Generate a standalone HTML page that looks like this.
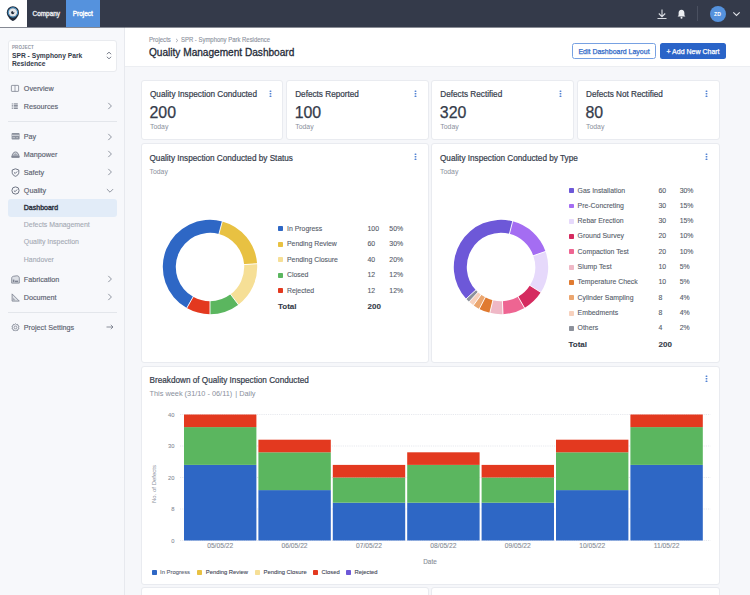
<!DOCTYPE html>
<html><head><meta charset="utf-8">
<style>
*{box-sizing:border-box;margin:0;padding:0}
html,body{width:750px;height:595px;overflow:hidden;background:#f6f7fa;font-family:"Liberation Sans",sans-serif;color:#3a4150}
.a{position:absolute;white-space:nowrap}
#nav{position:absolute;left:0;top:0;width:750px;height:27px;background:#343a4a}
#logo{position:absolute;left:0;top:0;width:27px;height:27px;background:#fff}
#side{position:absolute;left:0;top:27px;width:125px;height:568px;background:#f7f8fb;border-right:1px solid #e7e9ee}
#hdr{position:absolute;left:125px;top:27px;width:625px;height:40px;background:#fff;border-bottom:1px solid #eceef2}
.card{position:absolute;background:#fff;border:1px solid #e9ebf0;border-radius:3px}
.ttl{font-size:8.2px;color:#363d4c;-webkit-text-stroke:0.2px #363d4c}
.sub{font-size:6.9px;color:#8a909c}
.kb{position:absolute;width:3px;height:8px}
.kb i{position:absolute;left:0;width:1.4px;height:1.4px;background:#4d7fd0;border-radius:50%}
.nv{position:absolute;left:23.8px;margin-top:-0.4px;font-size:7.2px;color:#5b6270;white-space:nowrap;-webkit-text-stroke:0.15px #5b6270}
.chev{position:absolute;left:107.3px;margin-top:0.8px;width:4px;height:4px;border-right:1px solid #80869a;border-top:1px solid #80869a;transform:rotate(45deg)}
.lg{position:absolute;font-size:6.9px;color:#545b69;white-space:nowrap;-webkit-text-stroke:0.1px #545b69}
.sq{position:absolute;width:4.9px;height:4.9px;border-radius:0.8px;margin:0.6px 0 0 0.3px}
</style></head><body>
<div id="nav">
 <div class="a" style="left:66px;top:0;width:34px;height:27px;background:#5592dd"></div>
 <div class="a" style="left:32.6px;top:9.2px;font-size:6.4px;color:#e6e8ec;line-height:9px;-webkit-text-stroke:0.35px #e6e8ec;transform:scaleY(1.12);transform-origin:0 50%">Company</div>
 <div class="a" style="left:72.7px;top:9.2px;font-size:6.45px;color:#fff;line-height:9px;-webkit-text-stroke:0.35px #fff;transform:scaleY(1.12);transform-origin:0 50%">Project</div>
 <svg class="a" style="left:655px;top:8px" width="14" height="12" viewBox="0 0 14 12"><path d="M7 1.5V8.5M3.8 5.5L7 8.7L10.2 5.5M2.5 10.5H11.5" stroke="#d9dce2" stroke-width="1.1" fill="none"/></svg>
 <svg class="a" style="left:676px;top:9px" width="11" height="10" viewBox="0 0 11 10"><path d="M5.5 0.8C3.6 0.8 2.6 2.2 2.6 4V6.3L1.6 7.6H9.4L8.4 6.3V4C8.4 2.2 7.4 0.8 5.5 0.8Z" fill="#eceef2"/><circle cx="5.5" cy="8.7" r="1" fill="#eceef2"/></svg>
 <div class="a" style="left:697px;top:6px;width:1px;height:15px;background:#4a5060"></div>
 <div class="a" style="left:709.5px;top:6px;width:16px;height:16px;border-radius:50%;background:#5592dd;color:#fff;font-size:5.2px;font-weight:bold;text-align:center;line-height:16px">ZD</div>
 <svg class="a" style="left:732px;top:11px" width="9" height="6" viewBox="0 0 9 6"><path d="M1.3 1.3L4.5 4.4L7.7 1.3" stroke="#e0e3e8" stroke-width="1.1" fill="none"/></svg>
</div>
<div class="a" style="left:0;top:27px;width:750px;height:1px;background:rgba(40,46,62,0.55);z-index:5"></div>
<div id="logo">
 <svg class="a" style="left:0;top:0" width="27" height="27" viewBox="0 0 27 27"><path d="M12.9 20.9C11.6 20.9 6.9 16.8 6.8 12.4A6.1 6.1 0 0 1 19 12.4C18.9 16.8 14.2 20.9 12.9 20.9Z" fill="#232b3a"/><circle cx="12.9" cy="12.4" r="4.7" fill="none" stroke="#3d9ad6" stroke-width="1.0"/><circle cx="12.9" cy="12.4" r="4.2" fill="#e2e5e9"/><circle cx="12.7" cy="12.6" r="1.6" fill="#1f2736"/><circle cx="13.5" cy="11.8" r="0.75" fill="#e2e5e9"/></svg>
</div>
<div id="side">
 <div class="a" style="left:8px;top:12.5px;width:109px;height:32px;background:#fff;border:1px solid #e9ebef;border-radius:3px"></div>
 <div class="a" style="left:12px;top:18px;font-size:4.5px;font-weight:bold;color:#9096a2;letter-spacing:0.1px;line-height:5px">PROJECT</div>
 <div class="a" style="left:12px;top:25px;font-size:6.7px;font-weight:bold;color:#343b4a;line-height:8.2px">SPR - Symphony Park<br>Residence</div>
 <svg class="a" style="left:105px;top:24px" width="8" height="9" viewBox="0 0 8 9"><path d="M1.8 3.2L4 1.2L6.2 3.2M1.8 5.8L4 7.8L6.2 5.8" stroke="#6c7280" stroke-width="0.9" fill="none"/></svg>
 <!-- nav items -->
 <svg class="a" style="left:10px;top:57px" width="10" height="9" viewBox="0 0 10 9"><rect x="1.4" y="1.4" width="7.2" height="6" rx="0.5" stroke="#7d8391" stroke-width="0.8" fill="none"/><path d="M5 1.4V7.4" stroke="#7d8391" stroke-width="0.7"/></svg>
 <div class="nv" style="top:57px">Overview</div>
 <svg class="a" style="left:10px;top:75px" width="10" height="9" viewBox="0 0 10 9"><path d="M1.8 1.9H2.8M1.8 3.4H2.8M1.8 4.9H2.8M1.8 6.4H2.8M3.7 1.9H7.8M3.7 3.4H7.8M3.7 4.9H7.8M3.7 6.4H7.8" stroke="#6e7483" stroke-width="0.9"/></svg>
 <div class="nv" style="top:75px">Resources</div>
 <svg class="a" style="left:107px;top:74.9px" width="6" height="8" viewBox="0 0 6 8"><path d="M1.3 0.9L4.4 4L1.3 7.1" stroke="#7d8390" stroke-width="0.85" fill="none"/></svg>
 <div class="a" style="left:8px;top:94px;width:109px;height:1px;background:#e3e6eb"></div>
 <svg class="a" style="left:10.5px;top:105px" width="9" height="9" viewBox="0 0 9 9"><rect x="0.6" y="1.1" width="8" height="6.4" rx="0.8" fill="#8b919d"/><rect x="0.6" y="2.7" width="8" height="1.3" fill="#c9ccd3"/><rect x="1.5" y="5.3" width="2.6" height="0.8" fill="#c9ccd3"/><rect x="5.3" y="5.3" width="1.6" height="0.8" fill="#c9ccd3"/></svg>
 <div class="nv" style="top:105px">Pay</div>
 <svg class="a" style="left:107px;top:105.5px" width="6" height="8" viewBox="0 0 6 8"><path d="M1.3 0.9L4.4 4L1.3 7.1" stroke="#7d8390" stroke-width="0.85" fill="none"/></svg>
 <svg class="a" style="left:10.5px;top:123px" width="9" height="9" viewBox="0 0 9 9"><path d="M0.9 7C0.9 4.2 2.5 1.9 4.5 1.9C6.5 1.9 8.1 4.2 8.1 7Z" fill="#a2a7b2" stroke="#7d8391" stroke-width="0.8"/><path d="M2.3 4.5L4.5 2.9L6.7 4.5" stroke="#eef0f3" stroke-width="0.7" fill="none"/><rect x="0.4" y="6.2" width="8.2" height="1.5" rx="0.4" fill="#7d8391"/></svg>
 <div class="nv" style="top:123px">Manpower</div>
 <svg class="a" style="left:107px;top:123.1px" width="6" height="8" viewBox="0 0 6 8"><path d="M1.3 0.9L4.4 4L1.3 7.1" stroke="#7d8390" stroke-width="0.85" fill="none"/></svg>
 <svg class="a" style="left:10.5px;top:141px" width="9" height="9" viewBox="0 0 9 9"><path d="M4.5 0.8L7.8 2V4.5C7.8 6.3 6.4 7.6 4.5 8.3C2.6 7.6 1.2 6.3 1.2 4.5V2Z" stroke="#6e7483" stroke-width="1" fill="none"/><path d="M3 4.4L4.2 5.5L6.1 3.5" stroke="#6e7483" stroke-width="1" fill="none"/></svg>
 <div class="nv" style="top:141px">Safety</div>
 <svg class="a" style="left:107px;top:140.8px" width="6" height="8" viewBox="0 0 6 8"><path d="M1.3 0.9L4.4 4L1.3 7.1" stroke="#7d8390" stroke-width="0.85" fill="none"/></svg>
 <svg class="a" style="left:10.5px;top:158.5px" width="9" height="9" viewBox="0 0 9 9"><circle cx="4.5" cy="4.5" r="3.6" stroke="#6e7483" stroke-width="1" fill="none"/><path d="M2.9 4.6L4.1 5.7L6.1 3.5" stroke="#6e7483" stroke-width="1" fill="none"/></svg>
 <div class="nv" style="top:159px">Quality</div>
 <svg class="a" style="left:106px;top:160.8px" width="8" height="6" viewBox="0 0 8 6"><path d="M0.9 1.1L4 4.2L7.1 1.1" stroke="#7d8390" stroke-width="0.85" fill="none"/></svg>
 <div class="a" style="left:8px;top:172px;width:109px;height:17.5px;background:#e2ecf8;border-radius:3px"></div>
 <div class="nv" style="top:177px;color:#2f3644;font-size:7px;-webkit-text-stroke:0.4px #2f3644">Dashboard</div>
 <div class="nv" style="top:194.3px;font-size:6.95px;color:#a4a9b3;-webkit-text-stroke:0.1px #a4a9b3">Defects Management</div>
 <div class="nv" style="top:211.8px;font-size:6.95px;color:#a4a9b3;-webkit-text-stroke:0.1px #a4a9b3">Quality Inspection</div>
 <div class="nv" style="top:229.8px;font-size:6.95px;color:#a4a9b3;-webkit-text-stroke:0.1px #a4a9b3">Handover</div>
 <svg class="a" style="left:10.5px;top:247.5px" width="9" height="9" viewBox="0 0 9 9"><path d="M0.7 8.1V3.2C0.7 2.2 1.3 1.5 2.3 1.3L5.8 0.8C7.3 0.7 8.3 1.7 8.3 3.2V8.1Z" fill="#dde0e6" stroke="#7d8391" stroke-width="0.85"/><rect x="1.8" y="4.6" width="1.6" height="2.6" fill="#7d8391"/><rect x="3.9" y="5.6" width="3.2" height="1.6" fill="#7d8391"/></svg>
 <div class="nv" style="top:248px">Fabrication</div>
 <svg class="a" style="left:107px;top:248.2px" width="6" height="8" viewBox="0 0 6 8"><path d="M1.3 0.9L4.4 4L1.3 7.1" stroke="#7d8390" stroke-width="0.85" fill="none"/></svg>
 <svg class="a" style="left:10.5px;top:265.5px" width="9" height="9" viewBox="0 0 9 9"><path d="M1.1 0.9V8.1H8.3Z" fill="#dde0e6" stroke="#7d8391" stroke-width="0.85" stroke-linejoin="round"/><path d="M2.4 5.2V6.8H4" fill="none" stroke="#7d8391" stroke-width="0.6"/></svg>
 <div class="nv" style="top:266px">Document</div>
 <svg class="a" style="left:107px;top:266.2px" width="6" height="8" viewBox="0 0 6 8"><path d="M1.3 0.9L4.4 4L1.3 7.1" stroke="#7d8390" stroke-width="0.85" fill="none"/></svg>
 <div class="a" style="left:8px;top:285px;width:109px;height:1px;background:#e3e6eb"></div>
 <svg class="a" style="left:10.5px;top:295.5px" width="9" height="9" viewBox="0 0 9 9"><path d="M4.5 0.8L5.4 1.6L6.6 1.4L6.9 2.6L8 3.2L7.6 4.4L8 5.6L6.9 6.2L6.6 7.4L5.4 7.2L4.5 8.1L3.6 7.2L2.4 7.4L2.1 6.2L1 5.6L1.4 4.4L1 3.2L2.1 2.6L2.4 1.4L3.6 1.6Z" fill="none" stroke="#7d8391" stroke-width="0.9" stroke-linejoin="round"/><circle cx="4.5" cy="4.45" r="1.4" fill="none" stroke="#7d8391" stroke-width="0.8"/></svg>
 <div class="nv" style="top:296px">Project Settings</div>
 <svg class="a" style="left:106px;top:297px" width="8" height="6" viewBox="0 0 8 6"><path d="M0.5 3H7M4.8 0.9L7 3L4.8 5.1" stroke="#6e7483" stroke-width="0.8" fill="none"/></svg>
</div>
<div id="hdr">
 <div class="a" style="left:24px;top:9.75px;font-size:6.05px;color:#8a909c;line-height:7px;transform:scaleY(1.1);-webkit-text-stroke:0.1px #8a909c">Projects</div>
 <svg class="a" style="left:49.5px;top:11px" width="4" height="5" viewBox="0 0 4 5"><path d="M1 0.8L2.8 2.5L1 4.2" stroke="#8a909c" stroke-width="0.7" fill="none"/></svg>
 <div class="a" style="left:56px;top:10px;font-size:5.95px;color:#8a909c;line-height:7px;transform:scaleY(1.1);transform-origin:0 50%;-webkit-text-stroke:0.1px #8a909c">SPR - Symphony Park Residence</div>
 <div class="a" style="left:24px;top:19.8px;font-size:10.1px;color:#252b38;line-height:12px;-webkit-text-stroke:0.3px #252b38">Quality Management Dashboard</div>
 <div class="a" style="left:447px;top:16px;width:84px;height:16px;border:1px solid #77a1e2;border-radius:2.5px;font-size:7px;color:#3069c8;text-align:center;line-height:15px;-webkit-text-stroke:0.25px #3069c8">Edit Dashboard Layout</div>
 <div class="a" style="left:535px;top:16px;width:66px;height:16px;background:#2a64c8;border-radius:2.5px;font-size:7px;color:#fff;text-align:center;line-height:17px;-webkit-text-stroke:0.25px #fff">+ Add New Chart</div>
</div>
<div class="card" style="left:141px;top:80px;width:142.3px;height:60px">
 <div class="a ttl" style="left:8px;top:9px">Quality Inspection Conducted</div>
 <svg class="kb" style="left:126.8px;top:8.9px" width="3" height="8" viewBox="0 0 3 8"><rect x="0.5" y="0.5" width="2" height="1.5" rx="0.7" fill="#5383d3"/><rect x="0.5" y="3" width="2" height="1.5" rx="0.7" fill="#5383d3"/><rect x="0.5" y="5.6" width="2" height="1.5" rx="0.7" fill="#5383d3"/></svg>
 <div class="a" style="left:7.5px;top:22.5px;font-size:15.9px;color:#343b4a;line-height:18px;-webkit-text-stroke:0.25px #343b4a">200</div>
 <div class="a sub" style="left:8px;top:41.7px">Today</div>
</div>
<div class="card" style="left:286.2px;top:80px;width:142.6px;height:60px">
 <div class="a ttl" style="left:8px;top:9px">Defects Reported</div>
 <svg class="kb" style="left:126.8px;top:8.9px" width="3" height="8" viewBox="0 0 3 8"><rect x="0.5" y="0.5" width="2" height="1.5" rx="0.7" fill="#5383d3"/><rect x="0.5" y="3" width="2" height="1.5" rx="0.7" fill="#5383d3"/><rect x="0.5" y="5.6" width="2" height="1.5" rx="0.7" fill="#5383d3"/></svg>
 <div class="a" style="left:7.5px;top:22.5px;font-size:15.9px;color:#343b4a;line-height:18px;-webkit-text-stroke:0.25px #343b4a">100</div>
 <div class="a sub" style="left:8px;top:41.7px">Today</div>
</div>
<div class="card" style="left:431.3px;top:80px;width:142.6px;height:60px">
 <div class="a ttl" style="left:8px;top:9px">Defects Rectified</div>
 <svg class="kb" style="left:126.8px;top:8.9px" width="3" height="8" viewBox="0 0 3 8"><rect x="0.5" y="0.5" width="2" height="1.5" rx="0.7" fill="#5383d3"/><rect x="0.5" y="3" width="2" height="1.5" rx="0.7" fill="#5383d3"/><rect x="0.5" y="5.6" width="2" height="1.5" rx="0.7" fill="#5383d3"/></svg>
 <div class="a" style="left:7.5px;top:22.5px;font-size:15.9px;color:#343b4a;line-height:18px;-webkit-text-stroke:0.25px #343b4a">320</div>
 <div class="a sub" style="left:8px;top:41.7px">Today</div>
</div>
<div class="card" style="left:577px;top:80px;width:142.6px;height:60px">
 <div class="a ttl" style="left:8px;top:9px">Defects Not Rectified</div>
 <svg class="kb" style="left:126.8px;top:8.9px" width="3" height="8" viewBox="0 0 3 8"><rect x="0.5" y="0.5" width="2" height="1.5" rx="0.7" fill="#5383d3"/><rect x="0.5" y="3" width="2" height="1.5" rx="0.7" fill="#5383d3"/><rect x="0.5" y="5.6" width="2" height="1.5" rx="0.7" fill="#5383d3"/></svg>
 <div class="a" style="left:7.5px;top:22.5px;font-size:15.9px;color:#343b4a;line-height:18px;-webkit-text-stroke:0.25px #343b4a">80</div>
 <div class="a sub" style="left:8px;top:41.7px">Today</div>
</div>
<!--ROW2-->
<div class="card" style="left:141px;top:143px;width:287.8px;height:219.5px"></div>
<div class="a ttl" style="left:149.5px;top:153.5px">Quality Inspection Conducted by Status</div>
<svg class="kb" style="left:413.8px;top:153.0px" width="3" height="8" viewBox="0 0 3 8"><rect x="0.5" y="0.5" width="2" height="1.5" rx="0.7" fill="#5383d3"/><rect x="0.5" y="3" width="2" height="1.5" rx="0.7" fill="#5383d3"/><rect x="0.5" y="5.6" width="2" height="1.5" rx="0.7" fill="#5383d3"/></svg>
<div class="a sub" style="left:149.5px;top:168px">Today</div>
<div class="a" style="left:160px;top:217.2px"><svg width="100" height="100" viewBox="0 0 100 100"><path d="M62.30 4.43A47.2 47.2 0 0 1 97.09 46.71L84.12 47.61A34.2 34.2 0 0 0 58.91 16.98Z" fill="#e8c142"/><path d="M97.09 46.71A47.2 47.2 0 0 1 78.41 87.70L70.58 77.31A34.2 34.2 0 0 0 84.12 47.61Z" fill="#f6df96"/><path d="M78.41 87.70A47.2 47.2 0 0 1 50.00 97.20L50.00 84.20A34.2 34.2 0 0 0 70.58 77.31Z" fill="#5bb65f"/><path d="M50.00 97.20A47.2 47.2 0 0 1 26.76 91.08L33.16 79.77A34.2 34.2 0 0 0 50.00 84.20Z" fill="#e3391f"/><path d="M26.76 91.08A47.2 47.2 0 0 1 62.30 4.43L58.91 16.98A34.2 34.2 0 0 0 33.16 79.77Z" fill="#2e67c5"/><line x1="58.65" y1="17.95" x2="62.56" y2="3.46" stroke="#fff" stroke-width="0.9"/><line x1="83.12" y1="47.68" x2="98.08" y2="46.64" stroke="#fff" stroke-width="0.9"/><line x1="69.98" y1="76.51" x2="79.01" y2="88.49" stroke="#fff" stroke-width="0.9"/><line x1="50.00" y1="83.20" x2="50.00" y2="98.20" stroke="#fff" stroke-width="0.9"/><line x1="33.65" y1="78.90" x2="26.27" y2="91.95" stroke="#fff" stroke-width="0.9"/></svg></div>
<div class="sq" style="left:278px;top:225.7px;background:#2e67c5"></div>
<div class="lg" style="left:287px;top:225px">In Progress</div>
<div class="lg" style="left:367.5px;top:225px">100</div>
<div class="lg" style="left:389.3px;top:225px">50%</div>
<div class="sq" style="left:278px;top:241.2px;background:#e8c142"></div>
<div class="lg" style="left:287px;top:240px">Pending Review</div>
<div class="lg" style="left:367.5px;top:240px">60</div>
<div class="lg" style="left:389.3px;top:240px">30%</div>
<div class="sq" style="left:278px;top:256.7px;background:#f6df96"></div>
<div class="lg" style="left:287px;top:256px">Pending Closure</div>
<div class="lg" style="left:367.5px;top:256px">40</div>
<div class="lg" style="left:389.3px;top:256px">20%</div>
<div class="sq" style="left:278px;top:272.2px;background:#5bb65f"></div>
<div class="lg" style="left:287px;top:271px">Closed</div>
<div class="lg" style="left:367.5px;top:271px">12</div>
<div class="lg" style="left:389.3px;top:271px">12%</div>
<div class="sq" style="left:278px;top:287.7px;background:#e3391f"></div>
<div class="lg" style="left:287px;top:287px">Rejected</div>
<div class="lg" style="left:367.5px;top:287px">12</div>
<div class="lg" style="left:389.3px;top:287px">12%</div>
<div class="lg" style="left:278px;top:302px;font-weight:bold;color:#2f3644;font-size:8px">Total</div>
<div class="lg" style="left:367.5px;top:302px;font-weight:bold;color:#2f3644;font-size:8px">200</div>
<div class="card" style="left:431.3px;top:143px;width:288.6px;height:219.5px"></div>
<div class="a ttl" style="left:440px;top:153.5px">Quality Inspection Conducted by Type</div>
<svg class="kb" style="left:704.6px;top:153.0px" width="3" height="8" viewBox="0 0 3 8"><rect x="0.5" y="0.5" width="2" height="1.5" rx="0.7" fill="#5383d3"/><rect x="0.5" y="3" width="2" height="1.5" rx="0.7" fill="#5383d3"/><rect x="0.5" y="5.6" width="2" height="1.5" rx="0.7" fill="#5383d3"/></svg>
<div class="a sub" style="left:440px;top:168px">Today</div>
<div class="a" style="left:450.9px;top:217.1px"><svg width="100" height="100" viewBox="0 0 100 100"><path d="M61.66 4.26A47.2 47.2 0 0 1 94.55 34.40L82.28 38.70A34.2 34.2 0 0 0 58.45 16.86Z" fill="#a46df2"/><path d="M94.55 34.40A47.2 47.2 0 0 1 89.81 75.36L78.84 68.38A34.2 34.2 0 0 0 82.28 38.70Z" fill="#e6d9fb"/><path d="M89.81 75.36A47.2 47.2 0 0 1 73.53 90.92L67.05 79.65A34.2 34.2 0 0 0 78.84 68.38Z" fill="#d52b5f"/><path d="M73.53 90.92A47.2 47.2 0 0 1 51.98 97.16L51.43 84.17A34.2 34.2 0 0 0 67.05 79.65Z" fill="#ee6592"/><path d="M51.98 97.16A47.2 47.2 0 0 1 38.82 95.86L41.90 83.23A34.2 34.2 0 0 0 51.43 84.17Z" fill="#efb8c6"/><path d="M38.82 95.86A47.2 47.2 0 0 1 28.28 91.90L34.26 80.36A34.2 34.2 0 0 0 41.90 83.23Z" fill="#e07a30"/><path d="M28.28 91.90A47.2 47.2 0 0 1 22.46 88.33L30.04 77.77A34.2 34.2 0 0 0 34.26 80.36Z" fill="#eba66f"/><path d="M22.46 88.33A47.2 47.2 0 0 1 18.11 84.80L26.89 75.21A34.2 34.2 0 0 0 30.04 77.77Z" fill="#f7d1bd"/><path d="M18.11 84.80A47.2 47.2 0 0 1 15.14 81.83L24.74 73.06A34.2 34.2 0 0 0 26.89 75.21Z" fill="#8c919b"/><path d="M15.14 81.83A47.2 47.2 0 0 1 61.66 4.26L58.45 16.86A34.2 34.2 0 0 0 24.74 73.06Z" fill="#6d58d8"/><line x1="58.20" y1="17.83" x2="61.91" y2="3.29" stroke="#fff" stroke-width="0.9"/><line x1="81.33" y1="39.03" x2="95.49" y2="34.07" stroke="#fff" stroke-width="0.9"/><line x1="78.00" y1="67.84" x2="90.65" y2="75.90" stroke="#fff" stroke-width="0.9"/><line x1="66.55" y1="78.78" x2="74.03" y2="91.78" stroke="#fff" stroke-width="0.9"/><line x1="51.39" y1="83.17" x2="52.02" y2="98.16" stroke="#fff" stroke-width="0.9"/><line x1="42.14" y1="82.26" x2="38.58" y2="96.83" stroke="#fff" stroke-width="0.9"/><line x1="34.72" y1="79.48" x2="27.82" y2="92.79" stroke="#fff" stroke-width="0.9"/><line x1="30.63" y1="76.96" x2="21.87" y2="89.14" stroke="#fff" stroke-width="0.9"/><line x1="27.57" y1="74.48" x2="17.44" y2="85.54" stroke="#fff" stroke-width="0.9"/><line x1="25.48" y1="72.39" x2="14.41" y2="82.50" stroke="#fff" stroke-width="0.9"/></svg></div>
<div class="sq" style="left:568.5px;top:187.7px;background:#6d58d8"></div>
<div class="lg" style="left:577.6px;top:187px">Gas Installation</div>
<div class="lg" style="left:658.5px;top:187px">60</div>
<div class="lg" style="left:679.7px;top:187px">30%</div>
<div class="sq" style="left:568.5px;top:203.0px;background:#a46df2"></div>
<div class="lg" style="left:577.6px;top:202px">Pre-Concreting</div>
<div class="lg" style="left:658.5px;top:202px">30</div>
<div class="lg" style="left:679.7px;top:202px">15%</div>
<div class="sq" style="left:568.5px;top:218.3px;background:#e6d9fb"></div>
<div class="lg" style="left:577.6px;top:217px">Rebar Erection</div>
<div class="lg" style="left:658.5px;top:217px">30</div>
<div class="lg" style="left:679.7px;top:217px">15%</div>
<div class="sq" style="left:568.5px;top:233.6px;background:#d52b5f"></div>
<div class="lg" style="left:577.6px;top:232px">Ground Survey</div>
<div class="lg" style="left:658.5px;top:232px">20</div>
<div class="lg" style="left:679.7px;top:232px">10%</div>
<div class="sq" style="left:568.5px;top:248.9px;background:#ee6592"></div>
<div class="lg" style="left:577.6px;top:248px">Compaction Test</div>
<div class="lg" style="left:658.5px;top:248px">20</div>
<div class="lg" style="left:679.7px;top:248px">10%</div>
<div class="sq" style="left:568.5px;top:264.2px;background:#efb8c6"></div>
<div class="lg" style="left:577.6px;top:263px">Slump Test</div>
<div class="lg" style="left:658.5px;top:263px">10</div>
<div class="lg" style="left:679.7px;top:263px">5%</div>
<div class="sq" style="left:568.5px;top:279.5px;background:#e07a30"></div>
<div class="lg" style="left:577.6px;top:278px">Temperature Check</div>
<div class="lg" style="left:658.5px;top:278px">10</div>
<div class="lg" style="left:679.7px;top:278px">5%</div>
<div class="sq" style="left:568.5px;top:294.8px;background:#eba66f"></div>
<div class="lg" style="left:577.6px;top:294px">Cylinder Sampling</div>
<div class="lg" style="left:658.5px;top:294px">8</div>
<div class="lg" style="left:679.7px;top:294px">4%</div>
<div class="sq" style="left:568.5px;top:310.1px;background:#f7d1bd"></div>
<div class="lg" style="left:577.6px;top:309px">Embedments</div>
<div class="lg" style="left:658.5px;top:309px">8</div>
<div class="lg" style="left:679.7px;top:309px">4%</div>
<div class="sq" style="left:568.5px;top:325.4px;background:#8c919b"></div>
<div class="lg" style="left:577.6px;top:324px">Others</div>
<div class="lg" style="left:658.5px;top:324px">4</div>
<div class="lg" style="left:679.7px;top:324px">2%</div>
<div class="lg" style="left:568.5px;top:340px;font-weight:bold;color:#2f3644;font-size:8px">Total</div>
<div class="lg" style="left:658.5px;top:340px;font-weight:bold;color:#2f3644;font-size:8px">200</div>
<!--/ROW2-->

<!--ROW3-->
<div class="card" style="left:141px;top:365.5px;width:578.6px;height:219px"></div>
<div class="a ttl" style="left:149.5px;top:375.9px">Breakdown of Quality Inspection Conducted</div>
<svg class="kb" style="left:704.6px;top:375.0px" width="3" height="8" viewBox="0 0 3 8"><rect x="0.5" y="0.5" width="2" height="1.5" rx="0.7" fill="#5383d3"/><rect x="0.5" y="3" width="2" height="1.5" rx="0.7" fill="#5383d3"/><rect x="0.5" y="5.6" width="2" height="1.5" rx="0.7" fill="#5383d3"/></svg>
<div class="a sub" style="left:149.5px;top:389.2px;font-size:7.35px">This week (31/10 - 06/11) <span style='margin-left:1px'>| Daily</span></div>
<div class="a" style="left:150px;width:24.5px;text-align:right;top:410.50px;font-size:5.8px;color:#868c96;line-height:8px;-webkit-text-stroke:0.08px #868c96">40</div>
<div class="a" style="left:150px;width:24.5px;text-align:right;top:442.00px;font-size:5.8px;color:#868c96;line-height:8px;-webkit-text-stroke:0.08px #868c96">30</div>
<div class="a" style="left:150px;width:24.5px;text-align:right;top:473.50px;font-size:5.8px;color:#868c96;line-height:8px;-webkit-text-stroke:0.08px #868c96">20</div>
<div class="a" style="left:150px;width:24.5px;text-align:right;top:505.00px;font-size:5.8px;color:#868c96;line-height:8px;-webkit-text-stroke:0.08px #868c96">8</div>
<div class="a" style="left:150px;width:24.5px;text-align:right;top:536.50px;font-size:5.8px;color:#868c96;line-height:8px;-webkit-text-stroke:0.08px #868c96">0</div>
<svg class="a" style="left:0;top:0" width="750" height="595" viewBox="0 0 750 595"><line x1="180" y1="414.50" x2="710.5" y2="414.50" stroke="#dde0e6" stroke-width="0.7" stroke-dasharray="1.2 1"/><line x1="180" y1="446.00" x2="710.5" y2="446.00" stroke="#dde0e6" stroke-width="0.7" stroke-dasharray="1.2 1"/><line x1="180" y1="477.50" x2="710.5" y2="477.50" stroke="#dde0e6" stroke-width="0.7" stroke-dasharray="1.2 1"/><line x1="180" y1="509.00" x2="710.5" y2="509.00" stroke="#dde0e6" stroke-width="0.7" stroke-dasharray="1.2 1"/><line x1="180" y1="540.50" x2="710.5" y2="540.50" stroke="#dde0e6" stroke-width="0.7" stroke-dasharray="1.2 1"/><rect x="184.00" y="464.90" width="72.40" height="75.60" fill="#2e67c5"/><rect x="184.00" y="427.10" width="72.40" height="37.80" fill="#5bb65f"/><rect x="184.00" y="414.50" width="72.40" height="12.60" fill="#e3391f"/><rect x="258.40" y="490.10" width="72.40" height="50.40" fill="#2e67c5"/><rect x="258.40" y="452.30" width="72.40" height="37.80" fill="#5bb65f"/><rect x="258.40" y="439.70" width="72.40" height="12.60" fill="#e3391f"/><rect x="332.80" y="502.70" width="72.40" height="37.80" fill="#2e67c5"/><rect x="332.80" y="477.50" width="72.40" height="25.20" fill="#5bb65f"/><rect x="332.80" y="464.90" width="72.40" height="12.60" fill="#e3391f"/><rect x="407.20" y="502.70" width="72.40" height="37.80" fill="#2e67c5"/><rect x="407.20" y="464.90" width="72.40" height="37.80" fill="#5bb65f"/><rect x="407.20" y="452.30" width="72.40" height="12.60" fill="#e3391f"/><rect x="481.60" y="502.70" width="72.40" height="37.80" fill="#2e67c5"/><rect x="481.60" y="477.50" width="72.40" height="25.20" fill="#5bb65f"/><rect x="481.60" y="464.90" width="72.40" height="12.60" fill="#e3391f"/><rect x="556.00" y="490.10" width="72.40" height="50.40" fill="#2e67c5"/><rect x="556.00" y="452.30" width="72.40" height="37.80" fill="#5bb65f"/><rect x="556.00" y="439.70" width="72.40" height="12.60" fill="#e3391f"/><rect x="630.40" y="464.90" width="72.40" height="75.60" fill="#2e67c5"/><rect x="630.40" y="427.10" width="72.40" height="37.80" fill="#5bb65f"/><rect x="630.40" y="414.50" width="72.40" height="12.60" fill="#e3391f"/></svg>
<div class="a" style="left:200.20px;width:40px;text-align:center;top:542.2px;font-size:6.7px;color:#868c96;line-height:8px;-webkit-text-stroke:0.1px #868c96">05/05/22</div>
<div class="a" style="left:274.60px;width:40px;text-align:center;top:542.2px;font-size:6.7px;color:#868c96;line-height:8px;-webkit-text-stroke:0.1px #868c96">06/05/22</div>
<div class="a" style="left:349.00px;width:40px;text-align:center;top:542.2px;font-size:6.7px;color:#868c96;line-height:8px;-webkit-text-stroke:0.1px #868c96">07/05/22</div>
<div class="a" style="left:423.40px;width:40px;text-align:center;top:542.2px;font-size:6.7px;color:#868c96;line-height:8px;-webkit-text-stroke:0.1px #868c96">08/05/22</div>
<div class="a" style="left:497.80px;width:40px;text-align:center;top:542.2px;font-size:6.7px;color:#868c96;line-height:8px;-webkit-text-stroke:0.1px #868c96">09/05/22</div>
<div class="a" style="left:572.20px;width:40px;text-align:center;top:542.2px;font-size:6.7px;color:#868c96;line-height:8px;-webkit-text-stroke:0.1px #868c96">10/05/22</div>
<div class="a" style="left:646.60px;width:40px;text-align:center;top:542.2px;font-size:6.7px;color:#868c96;line-height:8px;-webkit-text-stroke:0.1px #868c96">11/05/22</div>
<div class="a" style="left:410px;width:40px;text-align:center;top:557.5px;font-size:6.4px;color:#868c96;line-height:8px;-webkit-text-stroke:0.1px #868c96">Date</div>
<div class="a" style="left:124.4px;top:480px;width:60px;text-align:center;font-size:6px;color:#8a909c;line-height:8px;transform:rotate(-90deg)">No. of Defects</div>
<!--LEG-->
<div class="sq" style="left:151.5px;top:569.4px;width:5px;height:5px;background:#2e67c5"></div>
<div class="a" style="left:160.1px;top:568px;font-size:5.85px;color:#5d6472;line-height:8px;-webkit-text-stroke:0.1px #5d6472">In Progress</div>
<div class="sq" style="left:196.8px;top:569.4px;width:5px;height:5px;background:#e8c142"></div>
<div class="a" style="left:205.8px;top:568px;font-size:5.85px;color:#3f4655;line-height:8px;-webkit-text-stroke:0.1px #3f4655">Pending Review</div>
<div class="sq" style="left:254.9px;top:569.4px;width:5px;height:5px;background:#f6df96"></div>
<div class="a" style="left:263.5px;top:568px;font-size:5.85px;color:#3f4655;line-height:8px;-webkit-text-stroke:0.1px #3f4655">Pending Closure</div>
<div class="sq" style="left:313px;top:569.4px;width:5px;height:5px;background:#e3391f"></div>
<div class="a" style="left:321.5px;top:568px;font-size:5.85px;color:#3f4655;line-height:8px;-webkit-text-stroke:0.1px #3f4655">Closed</div>
<div class="sq" style="left:345.5px;top:569.4px;width:5px;height:5px;background:#6d58d8"></div>
<div class="a" style="left:354.5px;top:568px;font-size:5.85px;color:#3f4655;line-height:8px;-webkit-text-stroke:0.1px #3f4655">Rejected</div>
<div class="card" style="left:141px;top:587px;width:287.8px;height:30px"></div>
<div class="card" style="left:431.3px;top:587px;width:288.6px;height:30px"></div>
<!--/ROW3-->
</body></html>
